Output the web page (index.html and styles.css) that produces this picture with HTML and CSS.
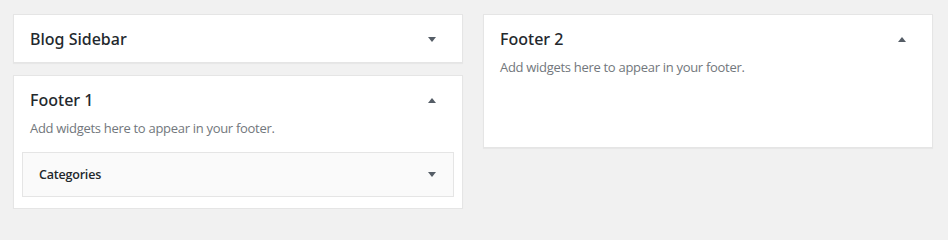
FILE: index.html
```html
<!DOCTYPE html>
<html lang="en">
<head>
<meta charset="utf-8">
<title>Widgets</title>
<link rel="stylesheet" href="styles.css">
</head>
<body>
<div class="widgets">
  <div class="column">
    <div class="sidebar collapsed">
      <div class="sidebar-name">
        <h2>Blog Sidebar</h2>
        <span class="arrow down"></span>
      </div>
    </div>
    <div class="sidebar">
      <div class="sidebar-name">
        <h2>Footer 1</h2>
        <span class="arrow up"></span>
      </div>
      <p class="description">Add widgets here to appear in your footer.</p>
      <div class="widget-list">
        <div class="widget">
          <h3>Categories</h3>
          <span class="arrow down"></span>
        </div>
      </div>
    </div>
  </div>
  <div class="column">
    <div class="sidebar">
      <div class="sidebar-name">
        <h2>Footer 2</h2>
        <span class="arrow up"></span>
      </div>
      <p class="description">Add widgets here to appear in your footer.</p>
      <div class="widget-list"></div>
    </div>
  </div>
</div>
</body>
</html>
```
FILE: styles.css
```css
* { box-sizing: border-box; }
html, body {
  margin: 0;
  padding: 0;
  background: #f1f1f1;
  font-family: "Open Sans", "Noto Sans", sans-serif;
  color: #23282d;
}
.widgets {
  display: grid;
  grid-template-columns: 450px 450px;
  column-gap: 20px;
  padding: 14px 0 0 13px;
  align-items: start;
}
.column {
  display: flex;
  flex-direction: column;
  gap: 12px;
}
.sidebar {
  background: #fff;
  border: 1px solid #e5e5e5;
  box-shadow: 0 1px 1px rgba(0, 0, 0, 0.04);
}
.sidebar-name {
  display: flex;
  align-items: center;
  justify-content: space-between;
  padding: 12px 26px 0 16px;
}
.collapsed .sidebar-name {
  padding-bottom: 11px;
}
.sidebar-name h2 {
  margin: 0;
  font-family: "Noto Sans", "Open Sans", sans-serif;
  font-size: 16px;
  line-height: 24px;
  font-weight: 500;
  color: #23282d;
}
.description {
  margin: 6px 0 0;
  padding: 0 16px;
  font-size: 13px;
  letter-spacing: -0.3px;
  line-height: 20px;
  color: #72777c;
}
.widget-list {
  padding: 14px 8px 10px;
  min-height: 70px;
}
.widget {
  display: flex;
  align-items: center;
  justify-content: space-between;
  height: 45px;
  padding: 0 17px 0 16px;
  background: #fafafa;
  border: 1px solid #e5e5e5;
}
.widget h3 {
  margin: 0;
  font-size: 12.5px;
  letter-spacing: -0.2px;
  line-height: 20px;
  font-weight: 600;
  color: #23282d;
}
.arrow {
  width: 0;
  height: 0;
  border-left: 4px solid transparent;
  border-right: 4px solid transparent;
}
.arrow.down { border-top: 5px solid #555d66; }
.arrow.up { border-bottom: 5px solid #555d66; }
```
